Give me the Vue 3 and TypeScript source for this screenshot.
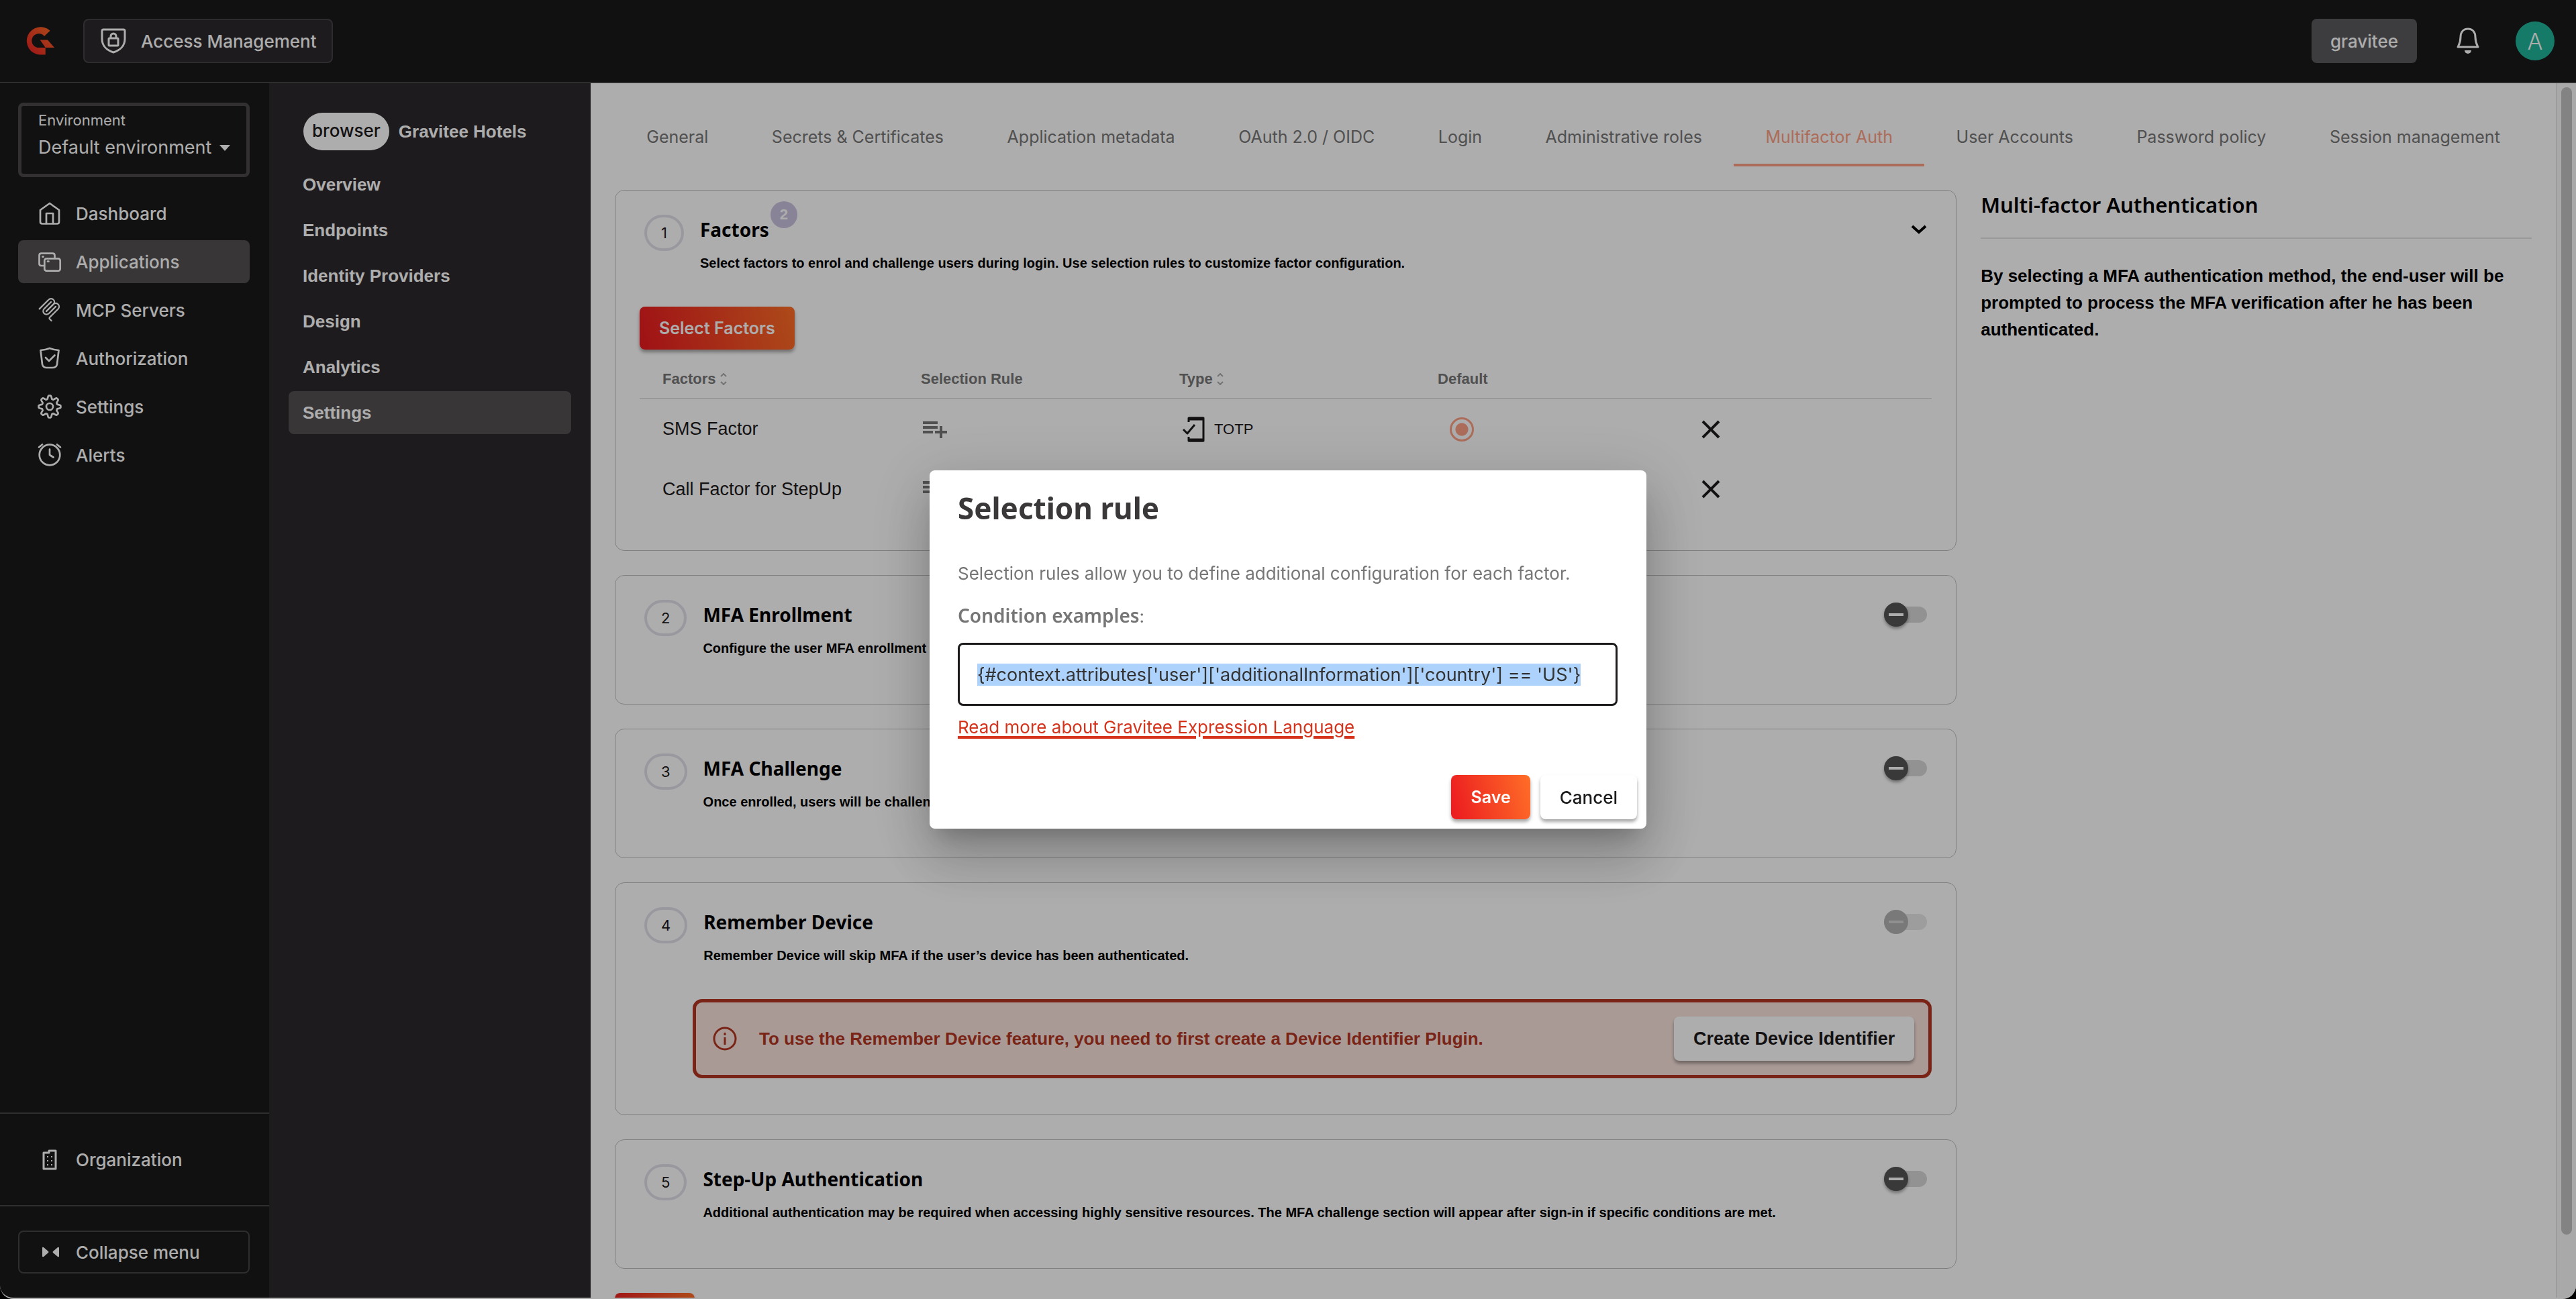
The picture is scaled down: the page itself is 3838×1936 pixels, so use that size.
<script setup lang="ts">
import { onMounted, ref } from 'vue'

interface NavItem { label: string; icon: string; active?: boolean }
interface Card { step: number; title: string; description: string; disabled?: boolean; alert?: boolean }

const navItems: NavItem[] = [
  { label: 'Dashboard', icon: 'home' },
  { label: 'Applications', icon: 'apps', active: true },
  { label: 'MCP Servers', icon: 'mcp' },
  { label: 'Authorization', icon: 'shield' },
  { label: 'Settings', icon: 'gear' },
  { label: 'Alerts', icon: 'alarm' },
]
const subItems = ['Overview', 'Endpoints', 'Identity Providers', 'Design', 'Analytics', 'Settings']
const tabs = [
  'General', 'Secrets & Certificates', 'Application metadata', 'OAuth 2.0 / OIDC', 'Login',
  'Administrative roles', 'Multifactor Auth', 'User Accounts', 'Password policy', 'Session management',
]
const columns = [
  { label: 'Factors', sortable: true },
  { label: 'Selection Rule', sortable: false },
  { label: 'Type', sortable: true },
  { label: 'Default', sortable: false },
]
const factors = [
  { name: 'SMS Factor', type: 'TOTP' },
  { name: 'Call Factor for StepUp', type: '' },
]
const cards: Card[] = [
  { step: 2, title: 'MFA Enrollment', description: 'Configure the user MFA enrollment rules.' },
  { step: 3, title: 'MFA Challenge', description: 'Once enrolled, users will be challenged.' },
  { step: 4, title: 'Remember Device', description: 'Remember Device will skip MFA if the user’s device has been authenticated.', disabled: true, alert: true },
  { step: 5, title: 'Step-Up Authentication', description: 'Additional authentication may be required when accessing highly sensitive resources. The MFA challenge section will appear after sign-in if specific conditions are met.' },
]

// Outline of an eight-toothed gear centred on (17, 18).
const gearPath = 'M' + Array.from({ length: 144 }, (_, i) => {
  const angle = (i / 144) * 2 * Math.PI
  const wave = Math.max(-1, Math.min(1, Math.cos(8 * angle) * 1.5))
  const radius = 14 + 2.4 * wave
  return `${(17 + radius * Math.cos(angle)).toFixed(2)} ${(18 + radius * Math.sin(angle)).toFixed(2)}`
}).join('L') + 'Z'

const defaultFactor = ref('SMS Factor')
const rule = ref("{#context.attributes['user']['additionalInformation']['country'] == 'US'}")
const ruleInput = ref<HTMLInputElement | null>(null)

onMounted(() => {
  ruleInput.value?.focus()
  ruleInput.value?.select()
})
</script>

<template>
  <div class="app">
    <header class="topbar">
      <svg class="logo" viewBox="0 0 43 42" role="img" aria-label="Gravitee">
        <defs>
          <linearGradient id="logo-fill" x1="0" y1="1" x2="1" y2="0">
            <stop offset="0" stop-color="#eb1e23" />
            <stop offset="1" stop-color="#fe6e26" />
          </linearGradient>
        </defs>
        <path fill="url(#logo-fill)" d="M36.600 5.800A20.700 20.700 0 1 0 21 41.600H29.700V31H43L33 19.600H21.700L29.700 31H21A10.500 10.500 0 1 1 28 14Z" />
      </svg>
      <button class="product">
        <svg viewBox="0 0 38 38" fill="none" stroke="currentColor" stroke-width="3">
          <path d="M4 2h30q2 0 2 2v12c0 10-7 17-17 20C9 33 2 26 2 16V4q0-2 2-2Z" stroke-linejoin="round" />
          <rect x="12" y="15" width="14" height="11" rx="1" />
          <path d="M15 15v-3a4 4 0 0 1 8 0v3" />
        </svg>
        Access Management
      </button>
      <div class="topbar-end">
        <button class="org">gravitee</button>
        <button class="icon-button" aria-label="Notifications">
          <svg viewBox="0 0 36 40" width="36" height="40" fill="none" stroke="currentColor" stroke-width="3" stroke-linejoin="round">
            <path d="M18 2c-7 0-11 5-11 12 0 8-2 11-4 15h30c-2-4-4-7-4-15 0-7-4-12-11-12Z" />
            <path d="M13 34h10a5 5 0 0 1-10 0Z" fill="currentColor" stroke="none" />
          </svg>
        </button>
        <button class="avatar">A</button>
      </div>
    </header>

    <div class="layout">
      <aside class="sidebar">
        <button class="environment">
          <span class="environment-label">Environment</span>
          <span class="environment-value">Default environment<i class="caret"></i></span>
        </button>
        <nav class="nav" aria-label="Main">
          <a v-for="item in navItems" :key="item.label" href="#" class="nav-item" :class="{ active: item.active }">
            <svg class="nav-icon" viewBox="0 0 36 36" fill="none" stroke="currentColor" stroke-width="2.700" stroke-linecap="round" stroke-linejoin="round">
              <template v-if="item.icon === 'home'">
                <path d="M3 13 17 3l14 10v17.500q0 3-3 3H6q-3 0-3-3Z" />
                <path d="M12 33V18h10v15" />
              </template>
              <template v-else-if="item.icon === 'apps'">
                <rect x="9.300" y="13.300" width="23.400" height="18.400" rx="3" />
                <path d="M8 24H4.500q-3 0-3-3V8.700q0-3 3-3h17q3 0 3 3v3" />
                <path d="M6.500 10.700h1M14 17.700h1.500" />
              </template>
              <template v-else-if="item.icon === 'mcp'">
                <g transform="translate(-2 -1) scale(0.205)" stroke-width="11">
                  <path d="M18 84.850 85.880 16.970c9.370-9.370 24.570-9.370 33.940 0s9.370 24.570 0 33.940L68.560 102.180" />
                  <path d="M69.270 101.470 119.820 50.910c9.380-9.370 24.570-9.370 33.940 0l.36.36c9.370 9.370 9.370 24.560 0 33.940L92.720 146.600c-3.120 3.120-3.120 8.190 0 11.310l12.610 12.610" />
                  <path d="M102.850 33.940 52.650 84.150c-9.370 9.370-9.370 24.560 0 33.940s24.570 9.370 33.940 0L136.790 67.880" />
                </g>
              </template>
              <template v-else-if="item.icon === 'shield'">
                <path d="M3.500 6Q11 5.500 17 3Q23 5.500 30.500 6L28 27Q27 32 21 32H13Q7 32 6 27Z" />
                <path d="m11 17 5 5 8.500-8.500" />
              </template>
              <template v-else-if="item.icon === 'gear'">
                <circle cx="17" cy="18" r="5" />
                <path :d="gearPath" />
              </template>
              <template v-else>
                <circle cx="17" cy="18" r="15.300" />
                <path d="M17 9.500V18l5.500 3.500M1 6.500l5-4M28 2.500l5 4" />
              </template>
            </svg>
            {{ item.label }}
          </a>
        </nav>
        <div class="organization">
          <a href="#" class="nav-item">
            <svg class="nav-icon" viewBox="0 0 36 36" fill="none" stroke="currentColor" stroke-width="3">
              <path d="M8 8h8V5h10v27H8Z" stroke-linejoin="round" />
              <path d="M13 14h2m4 0h2m-8 6h2m4 0h2m-8 6h2m4 0h2" stroke-width="2" />
            </svg>
            Organization
          </a>
        </div>
        <div class="collapse">
          <button class="collapse-button">
            <svg class="nav-icon" viewBox="0 0 36 36" fill="currentColor">
              <path d="M6 12q0-2 2-1l7 6q1 1 0 2l-7 6q-2 1-2-1ZM31 12q0-2-2-1l-7 6q-1 1 0 2l7 6q2 1 2-1Z" />
            </svg>
            Collapse menu
          </button>
        </div>
      </aside>

      <aside class="submenu">
        <div class="application">
          <span class="chip">browser</span>
          <span>Gravitee Hotels</span>
        </div>
        <nav class="subnav" aria-label="Application">
          <a v-for="item in subItems" :key="item" href="#" class="subnav-item" :class="{ active: item === 'Settings' }">{{ item }}</a>
        </nav>
      </aside>

      <main class="content">
        <nav class="tabs" aria-label="Application settings">
          <a v-for="tab in tabs" :key="tab" href="#" class="tab" :class="{ active: tab === 'Multifactor Auth' }">{{ tab }}</a>
        </nav>
        <div class="columns">
          <div class="cards">
            <section class="card">
              <div class="card-head">
                <span class="step">1</span>
                <div class="card-text">
                  <h2>Factors<span class="badge">2</span></h2>
                  <p>Select factors to enrol and challenge users during login. Use selection rules to customize factor configuration.</p>
                </div>
                <button class="icon-button chevron" aria-label="Collapse factors">
                  <svg viewBox="0 0 24 14" width="24" height="14" fill="none" stroke="currentColor" stroke-width="4"><path d="m2 2 10 9L22 2" /></svg>
                </button>
              </div>
              <div class="factors">
                <button class="primary">Select Factors</button>
                <table>
                  <thead>
                    <tr>
                      <th v-for="column in columns" :key="column.label" scope="col">
                        {{ column.label }}
                        <svg v-if="column.sortable" class="sort" viewBox="0 0 10 18" width="10" height="18" fill="none" stroke="currentColor" stroke-width="2"><path d="m1 5 4-4 4 4M1 13l4 4 4-4" /></svg>
                      </th>
                      <td></td>
                    </tr>
                  </thead>
                  <tbody>
                    <tr v-for="factor in factors" :key="factor.name">
                      <td>{{ factor.name }}</td>
                      <td>
                        <button class="icon-button rule" aria-label="Edit selection rule">
                          <svg viewBox="0 0 44 44" width="44" height="44" fill="none" stroke="currentColor" stroke-width="4"><path d="M3 12h22M3 19h22M3 26h15M21 26h18M30 17v18" /></svg>
                        </button>
                      </td>
                      <td>
                        <span v-if="factor.type" class="type">
                          <svg viewBox="0 0 44 44" width="44" height="44" fill="none" stroke="currentColor" stroke-width="3" stroke-linejoin="round"><path d="M14 11V5h22v34H14v-6M6 22l6 6 11-13" /><path d="M14 6h22M14 38h22" stroke-width="5" /></svg>
                          {{ factor.type }}
                        </span>
                      </td>
                      <td><input v-model="defaultFactor" class="radio" type="radio" name="default-factor" :value="factor.name" :aria-label="factor.name" /></td>
                      <td>
                        <button class="icon-button remove" :aria-label="'Remove ' + factor.name">
                          <svg viewBox="0 0 44 44" width="44" height="44" fill="none" stroke="currentColor" stroke-width="4"><path d="m10 10 24 24M34 10 10 34" /></svg>
                        </button>
                      </td>
                    </tr>
                  </tbody>
                </table>
              </div>
            </section>

            <section v-for="card in cards" :key="card.step" class="card">
              <div class="card-head">
                <span class="step">{{ card.step }}</span>
                <div class="card-text">
                  <h2>{{ card.title }}</h2>
                  <p>{{ card.description }}</p>
                </div>
                <input class="toggle" type="checkbox" role="switch" :disabled="card.disabled" :aria-label="card.title" />
              </div>
              <div v-if="card.alert" class="alert">
                <svg viewBox="0 0 36 36" width="36" height="36" fill="none" stroke="currentColor" stroke-width="3"><circle cx="18" cy="18" r="16" /><path d="M18 16v11M18 9v4" /></svg>
                <span class="alert-text">To use the Remember Device feature, you need to first create a Device Identifier Plugin.</span>
                <button class="raised">Create Device Identifier</button>
              </div>
            </section>
            <button class="primary submit" aria-label="Save settings"></button>
          </div>
          <aside class="help">
            <h3>Multi-factor Authentication</h3>
            <p>By selecting a MFA authentication method, the end-user will be prompted to process the MFA verification after he has been authenticated.</p>
          </aside>
        </div>
      </main>
      <div class="scrollbar"><div class="thumb"></div></div>
    </div>
  </div>

  <div class="backdrop">
    <section class="dialog" role="dialog" aria-modal="true" aria-labelledby="dialog-title">
      <h1 id="dialog-title">Selection rule</h1>
      <p class="intro">Selection rules allow you to define additional configuration for each factor.</p>
      <label class="field-label" for="rule"><strong>Condition examples</strong>:</label>
      <input id="rule" ref="ruleInput" v-model="rule" class="rule-input" type="text" spellcheck="false" />
      <a class="link" href="#">Read more about Gravitee Expression Language</a>
      <div class="actions">
        <button class="primary">Save</button>
        <button class="raised cancel">Cancel</button>
      </div>
    </section>
  </div>
</template>

<style>
body {
  background: #000;
}
</style>

<style scoped>
* {
  box-sizing: border-box;
}
.app,
.backdrop {
  --brand: "Inter", "Noto Sans", sans-serif;
  --heading: "Noto Sans", "Open Sans", sans-serif;
  --plain: "Liberation Sans", Arial, sans-serif;
  font-family: var(--brand);
}
button,
input {
  font: inherit;
  color: inherit;
  margin: 0;
}
button {
  border: 0;
  padding: 0;
  background: none;
  white-space: nowrap;
}
a {
  color: inherit;
  text-decoration: none;
}
h1,
h2,
h3,
p {
  margin: 0;
}
svg {
  display: block;
  flex: none;
}
.app {
  display: flex;
  flex-direction: column;
  height: 100vh;
  overflow: hidden;
  border-bottom: 2px solid #fff;
  border-radius: 0 0 20px 20px;
  background: #fff;
}
.topbar {
  display: flex;
  flex: none;
  align-items: center;
  height: 124px;
  padding: 0 32px 0 38px;
  border-bottom: 2px solid #454445;
  background: #1a1a1a;
  color: #fff;
}
.logo {
  width: 43px;
  height: 42px;
  margin-right: 43px;
}
.product {
  display: flex;
  align-items: center;
  gap: 22px;
  height: 66px;
  padding: 0 22px 0 24px;
  border: 2px solid #454244;
  border-radius: 8px;
  background: #2c292b;
  font-size: 26px;
  font-weight: 500;
}
.product svg {
  width: 38px;
  height: 38px;
}
.topbar-end {
  display: flex;
  align-items: center;
  margin-left: auto;
}
.org {
  height: 66px;
  padding: 0 28px;
  border-radius: 8px;
  background: #5b5b5e;
  font-size: 26px;
  font-weight: 500;
}
.icon-button {
  display: grid;
  place-items: center;
}
.topbar-end .icon-button {
  margin: 0 53px 0 58px;
}
.avatar {
  width: 58px;
  height: 58px;
  border-radius: 50%;
  background: #20b69a;
  font-size: 34px;
  font-weight: 300;
}
.layout {
  display: flex;
  flex: 1;
  min-height: 0;
}
.sidebar {
  display: flex;
  flex: none;
  flex-direction: column;
  width: 401px;
  background: #1a1a1a;
  color: #fff;
}
.environment {
  display: flex;
  flex-direction: column;
  height: 111px;
  margin: 29px 29px 0 27px;
  padding: 6px 25px;
  border: 5px solid #4a4849;
  border-radius: 8px;
  text-align: left;
}
.environment-label {
  font-size: 22px;
  line-height: 30px;
}
.environment-value {
  display: flex;
  align-items: center;
  gap: 12px;
  margin-top: 6px;
  font-size: 27px;
  line-height: 40px;
}
.caret {
  border: 8px solid transparent;
  border-top: 9px solid currentColor;
  border-bottom: 0;
}
.nav {
  display: flex;
  flex-direction: column;
  gap: 8px;
  margin-top: 22px;
  padding: 0 29px 0 27px;
}
.nav-item {
  display: flex;
  align-items: center;
  gap: 20px;
  height: 64px;
  padding-left: 30px;
  border-radius: 8px;
  font-size: 26px;
  font-weight: 500;
}
.nav-item.active,
.subnav-item.active {
  background: #545052;
}
.nav-icon {
  width: 36px;
  height: 36px;
  overflow: visible;
}
.organization {
  margin-top: auto;
  padding: 36px 27px;
  border-top: 2px solid #454445;
}
.collapse {
  padding: 36px 29px 36px 27px;
  border-top: 2px solid #454445;
}
.collapse-button {
  display: flex;
  align-items: center;
  gap: 20px;
  width: 100%;
  height: 64px;
  padding-left: 28px;
  border: 2px solid #454445;
  border-radius: 8px;
  font-size: 26px;
  font-weight: 500;
}
.submenu {
  flex: none;
  width: 479px;
  background: #2c292b;
  color: #fff;
  font-family: var(--plain);
  font-size: 26px;
  font-weight: 700;
}
.application {
  display: flex;
  align-items: center;
  gap: 14px;
  margin: 44px 0 0 51px;
}
.chip {
  height: 56px;
  padding: 0 13px;
  border-radius: 28px;
  background: #fff;
  color: #1d1a1b;
  font-family: var(--brand);
  font-size: 26px;
  font-weight: 500;
  line-height: 54px;
}
.subnav {
  display: flex;
  flex-direction: column;
  gap: 4px;
  margin: 19px 29px 0;
}
.subnav-item {
  padding-left: 21px;
  border-radius: 8px;
  line-height: 64px;
}
.content {
  flex: 1;
  min-width: 0;
  padding: 36px 36px 0;
  overflow: hidden;
  color: #000;
}
.tabs {
  display: flex;
  height: 88px;
}
.tab {
  flex: 1 1 auto;
  border-bottom: 4px solid transparent;
  color: #767676;
  font-size: 25px;
  line-height: 88px;
  text-align: center;
}
.tab.active {
  border-color: #fea084;
  color: #fea084;
}
.columns {
  display: flex;
  align-items: flex-start;
}
.cards {
  display: flex;
  flex: 0 0 70%;
  flex-direction: column;
  gap: 36px;
  margin-top: 35px;
}
.card {
  padding: 36px;
  border: 1px solid #c0bcbe;
  border-radius: 14px;
}
.card-head {
  display: flex;
  align-items: flex-start;
  padding: 0 7px 33px;
}
.step {
  flex: none;
  height: 54px;
  padding: 0 21px;
  border: 4px solid #e2e0eb;
  border-radius: 27px;
  color: #1d1a1b;
  font-size: 22px;
  line-height: 47px;
}
.card-text {
  flex: 1;
  margin-left: 24px;
}
.card-text h2 {
  display: flex;
  font-family: var(--heading);
  font-size: 28px;
  font-weight: 700;
  line-height: 44px;
}
.card-text p {
  margin-top: 14px;
  font-family: var(--plain);
  font-size: 20px;
  font-weight: 700;
  line-height: 28px;
}
.badge {
  width: 40px;
  height: 40px;
  margin: -20px 0 0 2px;
  border-radius: 50%;
  background: #cbc2e1;
  color: #fff;
  font-family: var(--plain);
  font-size: 22px;
  font-weight: 700;
  line-height: 40px;
  text-align: center;
}
.chevron {
  margin-top: 15px;
}
.factors {
  padding: 18px 0 10px;
}
.primary {
  height: 64px;
  padding: 0 29px;
  border-radius: 8px;
  background: linear-gradient(75deg, #eb1920, #ff6e27);
  box-shadow: 0 4px 5px rgba(0, 0, 0, 0.35);
  color: #fff;
  font-size: 25px;
  font-weight: 600;
}
.raised {
  height: 66px;
  padding: 0 29px;
  border-radius: 8px;
  background: #fff;
  box-shadow: 0 4px 5px rgba(0, 0, 0, 0.35);
  color: #1d1a1b;
  font-family: var(--plain);
  font-size: 27px;
  font-weight: 700;
}
table {
  width: 100%;
  margin-top: 16px;
  border-collapse: collapse;
  table-layout: fixed;
  font-family: var(--plain);
}
thead th,
thead td {
  height: 57px;
  padding: 0 0 0 34px;
  border-bottom: 2px solid #e0e0e0;
  color: #767676;
  font-size: 22px;
  font-weight: 700;
  text-align: left;
}
.sort {
  display: inline-block;
  margin-bottom: -2px;
  color: #aaa;
}
tbody td {
  height: 90px;
  padding: 0 0 0 34px;
  color: #1d1a1b;
  font-size: 27px;
}
.rule {
  color: #767676;
}
.type {
  display: flex;
  align-items: center;
  gap: 8px;
  font-size: 22px;
}
.radio {
  display: block;
  width: 36px;
  height: 36px;
  margin-left: 18px;
  border: 3px solid #fea084;
  border-radius: 50%;
  appearance: none;
}
.radio:checked {
  background: radial-gradient(circle, #fea084 9px, transparent 10px);
}
.toggle {
  position: relative;
  flex: none;
  width: 64px;
  height: 24px;
  margin-top: 10px;
  border-radius: 12px;
  background: #d8d8d8;
  appearance: none;
}
.toggle::before {
  position: absolute;
  top: -6px;
  left: 0;
  width: 36px;
  height: 36px;
  border-radius: 50%;
  background: #555;
  box-shadow: 0 3px 4px rgba(0, 0, 0, 0.35);
  content: "";
}
.toggle::after {
  position: absolute;
  top: 10px;
  left: 7px;
  width: 22px;
  height: 4px;
  background: #fff;
  content: "";
}
.toggle:disabled {
  background: #e8e8e8;
}
.toggle:disabled::before {
  background: #b3b3b3;
  box-shadow: none;
}
.toggle:disabled::after {
  background: #d3d3d3;
}
.alert {
  display: flex;
  align-items: center;
  height: 118px;
  margin: 18px 0 18px 79px;
  padding: 0 21px 0 25px;
  border: 5px solid #b33522;
  border-radius: 14px;
  background: #fbe4de;
  color: #b33522;
}
.alert-text {
  margin-left: 33px;
  font-family: var(--plain);
  font-size: 26px;
  font-weight: 700;
}
.alert .raised {
  margin-left: auto;
}
.submit {
  width: 119px;
}
.help {
  flex: 1;
  padding: 35px 0 0 36px;
}
.help h3 {
  padding-bottom: 27px;
  border-bottom: 2px solid #e0e0e0;
  font-family: var(--heading);
  font-size: 31px;
  font-weight: 600;
  line-height: 44px;
}
.help p {
  margin-top: 35px;
  font-family: var(--plain);
  font-size: 26px;
  font-weight: 700;
  line-height: 40px;
}
.scrollbar {
  flex: none;
  width: 30px;
  padding: 6px 6px 94px;
  border-left: 2px solid #e6e6e6;
  background: #fafafa;
}
.thumb {
  width: 16px;
  height: 100%;
  border-radius: 8px;
  background: #c1c1c1;
}
.backdrop {
  position: fixed;
  inset: 0;
  display: grid;
  place-items: center;
  background: rgba(0, 0, 0, 0.32);
}
.dialog {
  display: flex;
  flex-direction: column;
  align-items: flex-start;
  width: 1068px;
  padding: 26px 14px 14px 42px;
  border-radius: 8px;
  background: #fff;
  box-shadow:
    0 22px 30px -14px rgba(0, 0, 0, 0.2),
    0 48px 76px 6px rgba(0, 0, 0, 0.14),
    0 18px 92px 16px rgba(0, 0, 0, 0.12);
  color: #767676;
  font-size: 26px;
}
.dialog h1 {
  color: #3a3839;
  font-family: var(--heading);
  font-size: 44px;
  font-weight: 700;
  line-height: 60px;
}
.intro {
  margin-top: 48px;
  line-height: 40px;
}
.field-label {
  margin-top: 22px;
  line-height: 40px;
}
.field-label strong {
  font-family: var(--heading);
  font-size: 28px;
  font-weight: 600;
}
.rule-input {
  width: 983px;
  height: 94px;
  margin-top: 19px;
  padding: 0 26px;
  border: 3px solid #1d1a1b;
  border-radius: 8px;
  background: #fff;
  color: #333;
  font-size: 27px;
  line-height: 40px;
  outline: 0;
}
.rule-input::selection {
  background: #add2fb;
  color: #333;
}
.link {
  margin-top: 12px;
  color: #d5331b;
  line-height: 40px;
  text-decoration: underline;
  text-decoration-thickness: 4px;
  text-underline-offset: 4px;
}
.actions {
  display: flex;
  gap: 15px;
  align-self: flex-end;
  margin-top: 51px;
}
.actions .primary {
  height: 66px;
}
.cancel {
  font-family: var(--brand);
  font-size: 26px;
  font-weight: 500;
}
</style>
